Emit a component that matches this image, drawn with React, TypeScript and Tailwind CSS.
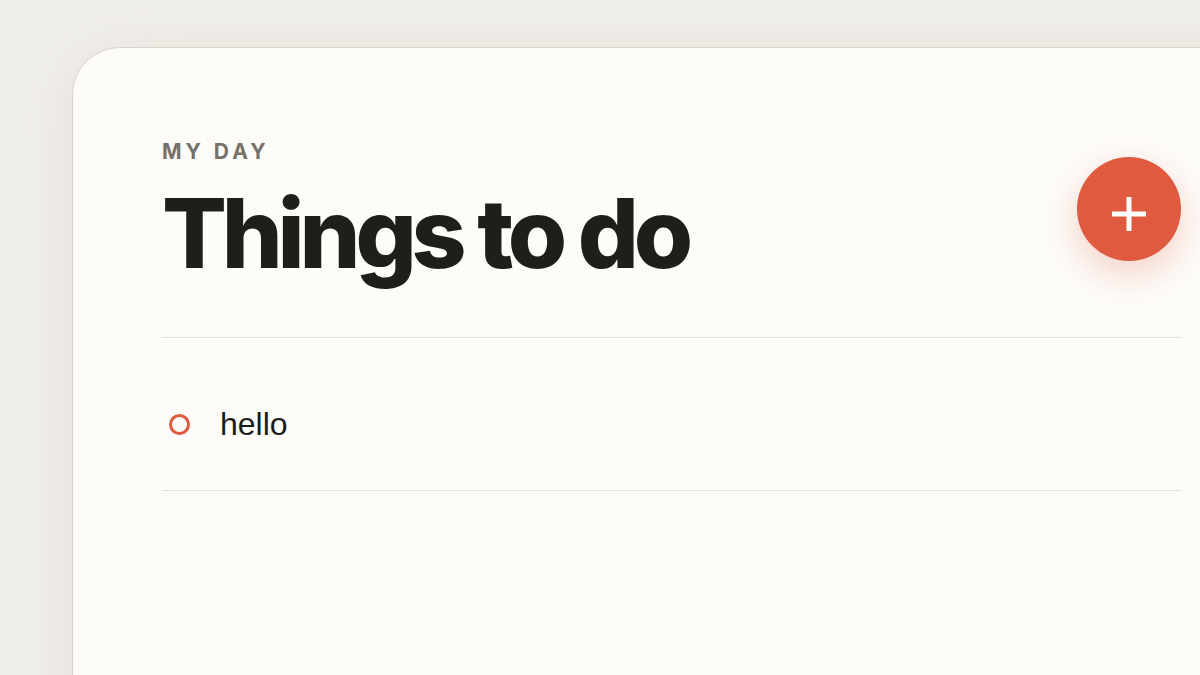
const todos = [{ id: 1, text: "hello", done: false }];

function PlusIcon() {
  return (
    <svg width="34" height="34" viewBox="0 0 34 34" fill="none" stroke="currentColor" strokeWidth="5">
      <line x1="17" y1="0" x2="17" y2="34" />
      <line x1="0" y1="17" x2="34" y2="17" />
    </svg>
  );
}

export default function App() {
  return (
    <div className="h-[675px] w-full overflow-hidden bg-[#f1efea] pl-[72px] pt-[47px] font-['Inter',sans-serif]">
      <div className="h-[720px] w-[1300px] rounded-[48px] border border-[#d9d5cc] bg-[#fdfcf9] pl-[89px] pt-[93px] shadow-[0_10px_60px_rgba(120,110,90,0.12)]">
        <div className="w-[1019px]">
          <header className="flex items-start justify-between">
            <div>
              <p className="text-[21px] font-bold uppercase leading-none tracking-[0.19em] text-[#75726a]">
                My Day
              </p>
              <h1 className="mt-[23px] text-[96px] font-extrabold leading-none tracking-[-0.054em] text-[#1d1f1b]">
                Things to do
              </h1>
            </div>
            <button
              type="button"
              className="mt-[16px] flex h-[104px] w-[104px] items-center justify-center rounded-full bg-[#e05a3f] text-white shadow-[0_12px_36px_rgba(224,90,63,0.28)]"
            >
              <span className="mt-[10px]">
                <PlusIcon />
              </span>
            </button>
          </header>

          <div className="mt-[56px] border-t border-[#e3e0da]">
            {todos.map((todo) => (
              <div key={todo.id} className="border-b border-[#e3e0da] pb-[46px] pl-[7px] pt-[66px]">
                <div className="flex h-[40px] items-center">
                  <span className="h-[21px] w-[21px] rounded-full border-[3px] border-[#e05a3f]" />
                  <span className="ml-[30px] font-['Liberation_Sans',Arial,sans-serif] text-[32px] text-[#1c1c1a]">
                    {todo.text}
                  </span>
                </div>
              </div>
            ))}
          </div>
        </div>
      </div>
    </div>
  );
}
